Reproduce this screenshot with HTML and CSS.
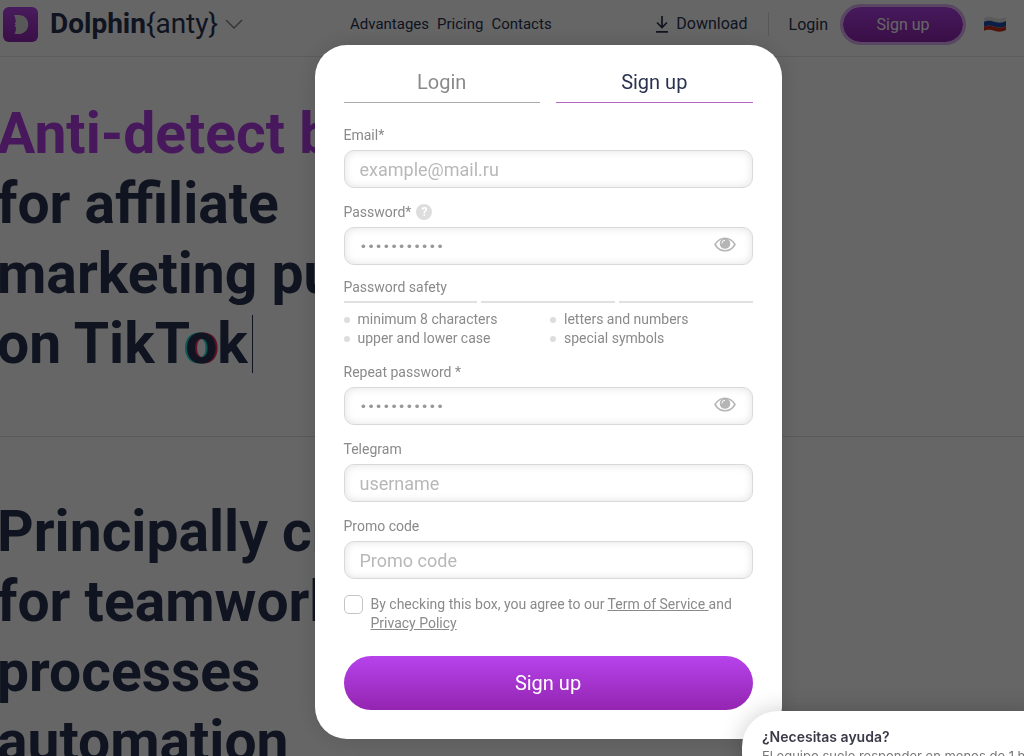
FILE: index.html
```html
<!DOCTYPE html>
<html lang="en">
<head>
<meta charset="utf-8">
<meta name="viewport" content="width=device-width, initial-scale=1">
<title>Dolphin{anty}</title>
<link rel="stylesheet" href="styles.css">
</head>
<body>
<div class="page">
  <header class="header">
    <a class="brand" href="#">
      <svg class="brand-logo" viewBox="0 0 35 35" aria-hidden="true">
        <defs><linearGradient id="logo-fill" x1="0" y1="0" x2="0" y2="1"><stop offset="0" stop-color="#b445ea"/><stop offset="1" stop-color="#9326b0"/></linearGradient></defs>
        <rect width="35" height="35" rx="6" fill="url(#logo-fill)"/>
        <path d="M11 8h4.500c6 0 9.700 4 9.700 9.400S21 27 15.500 27H11.500c1.200-2 1.600-4.500 1.400-7l-1.400-1 1.200-1.600-1.200-1.400 1.400-1C12.800 12.500 12 10 11 8z" fill="#ddd"/>
      </svg>
      <span class="brand-name"><strong>Dolphin</strong>{anty}</span>
      <svg class="brand-chevron" viewBox="0 0 18 10" aria-hidden="true"><path d="M1 1l8 8 8-8" fill="none" stroke="#888" stroke-width="1.500"/></svg>
    </a>
    <nav class="nav">
      <a href="#">Advantages</a>
      <a href="#">Pricing</a>
      <a href="#">Contacts</a>
    </nav>
    <div class="actions">
      <a class="download" href="#">
        <svg viewBox="0 0 14 18" aria-hidden="true"><path d="M7 1v11M2 7.500l5 5 5-5M1 16.800h12" fill="none" stroke="currentColor" stroke-width="1.700"/></svg>
        Download
      </a>
      <a class="login" href="#">Login</a>
      <button class="header-signup" type="button">Sign up</button>
      <button class="language" type="button" aria-label="Russian">
        <svg viewBox="0 0 22 16" aria-hidden="true">
          <path d="M0 2c4-2 7-1 11 0s7 1 11-1v5c-4 2-7 2-11 1S4 5 0 7z" fill="#e4e4e4"/>
          <path d="M0 6c4-2 7-1 11 0s7 1 11-1v5c-4 2-7 2-11 1S4 9 0 11z" fill="#1c4fb0"/>
          <path d="M0 11c4-2 7-1 11 0s7 1 11-1v4c-4 2-7 2-11 1S4 13 0 15z" fill="#c8301c"/>
        </svg>
      </button>
    </div>
  </header>
  <main>
    <section class="section">
      <h1 class="headline"><span class="accent">Anti-detect browser</span><br>for affiliate<br>marketing purposes<br><span class="typed">on TikT<span class="glitch">o</span>k</span></h1>
    </section>
    <section class="section">
      <h2 class="headline">Principally created<br>for teamwork<br>processes<br>automation</h2>
    </section>
  </main>
</div>

<div class="overlay">
  <div class="modal" role="dialog" aria-modal="true" aria-label="Sign up">
    <div class="tabs" role="tablist">
      <button class="tab" type="button" role="tab" aria-selected="false">Login</button>
      <button class="tab tab-active" type="button" role="tab" aria-selected="true">Sign up</button>
    </div>
    <form class="form">
      <div class="field">
        <label for="email">Email*</label>
        <input class="input" id="email" type="email" placeholder="example@mail.ru">
      </div>
      <div class="field">
        <div class="label-row">
          <label for="password">Password*</label>
          <button class="help" type="button" aria-label="Password help">?</button>
        </div>
        <div class="secret">
          <input class="input" id="password" type="password" placeholder="•••••••••••">
          <button class="reveal" type="button" aria-label="Show password">
            <svg viewBox="0 0 22 15" aria-hidden="true"><path d="M1 7.500C3.500 3.300 7 1.200 11 1.200s7.500 2.100 10 6.300c-2.500 4.200-6 6.300-10 6.300S3.500 11.700 1 7.500z" fill="#fff" stroke="#b5b5b5" stroke-width="1.500"/><circle cx="11" cy="6.500" r="5.300" fill="#b5b5b5"/><path d="M7.800 6.500A3.200 3.200 0 0 1 11 3.300" fill="none" stroke="#fff" stroke-width="1"/></svg>
          </button>
        </div>
      </div>
      <div class="safety">
        <p class="safety-title">Password safety</p>
        <div class="meter"><span></span><span></span><span></span></div>
        <ul class="rules">
          <li>minimum 8 characters</li>
          <li>letters and numbers</li>
          <li>upper and lower case</li>
          <li>special symbols</li>
        </ul>
      </div>
      <div class="field">
        <label for="repeat">Repeat password *</label>
        <div class="secret">
          <input class="input" id="repeat" type="password" placeholder="•••••••••••">
          <button class="reveal" type="button" aria-label="Show repeated password">
            <svg viewBox="0 0 22 15" aria-hidden="true"><path d="M1 7.500C3.500 3.300 7 1.200 11 1.200s7.500 2.100 10 6.300c-2.500 4.200-6 6.300-10 6.300S3.500 11.700 1 7.500z" fill="#fff" stroke="#b5b5b5" stroke-width="1.500"/><circle cx="11" cy="6.500" r="5.300" fill="#b5b5b5"/><path d="M7.800 6.500A3.200 3.200 0 0 1 11 3.300" fill="none" stroke="#fff" stroke-width="1"/></svg>
          </button>
        </div>
      </div>
      <div class="field">
        <label for="telegram">Telegram</label>
        <input class="input" id="telegram" type="text" placeholder="username">
      </div>
      <div class="field">
        <label for="promo">Promo code</label>
        <input class="input" id="promo" type="text" placeholder="Promo code">
      </div>
      <div class="consent">
        <input class="checkbox" id="agree" type="checkbox">
        <label for="agree">By checking this box, you agree to our <a href="#">Term of Service </a>and <a href="#">Privacy Policy</a></label>
      </div>
      <button class="submit" type="submit">Sign up</button>
    </form>
  </div>
</div>

<aside class="support">
  <strong>¿Necesitas ayuda?</strong>
  <p>El equipo suele responder en menos de 1 hora</p>
</aside>
</body>
</html>
```
FILE: styles.css
```css
*, *::before, *::after { box-sizing: border-box; }

body {
  margin: 0;
  height: 100vh;
  overflow: hidden;
  background: #fff;
  color: #293350;
  font-family: Roboto, "Liberation Sans", sans-serif;
  font-size: 14px;
}

a { color: inherit; text-decoration: none; }

button {
  margin: 0;
  padding: 0;
  border: 0;
  background: none;
  color: inherit;
  font: inherit;
}

.page { height: 100%; overflow: hidden; }

/* Header */
.header {
  display: flex;
  align-items: center;
  height: 57px;
  padding: 0 18px 8px 3px;
  border-bottom: 1px solid #e6e6e6;
  font-size: 16px;
}

.brand { display: flex; align-items: center; }
.brand-logo { width: 35px; height: 35px; margin-right: 12px; }
.brand-name { font-size: 28px; line-height: 36px; }
.brand-chevron { width: 18px; height: 10px; margin-left: 7px; }

.nav { display: flex; gap: 8px; margin-left: 107px; font-size: 15px; }

.actions { display: flex; align-items: center; margin-left: auto; }

.download {
  display: flex;
  align-items: center;
  gap: 7px;
  padding-right: 20px;
  border-right: 1px solid #ddd;
  line-height: 24px;
}
.download svg { width: 14px; height: 18px; }
.login { margin: 0 12px 0 20px; }

.header-signup {
  width: 126px;
  height: 41px;
  border: 3px solid #dfb0f5;
  border-radius: 21px;
  background: linear-gradient(#b141e8, #9124ae) padding-box;
  color: #fff;
}

.language { margin-left: 18px; }
.language svg { display: block; width: 22px; height: 16px; }

/* Landing text */
.section { padding: 42px 0 57px; border-bottom: 1px solid #e0e0e0; }
.section + .section { padding-top: 60px; border-bottom: 0; }

.headline {
  margin: 0 0 0 -3px;
  font-size: 57px;
  font-weight: 700;
  line-height: 70px;
  white-space: nowrap;
}
.accent { color: #b13fe6; }
.typed { display: inline-block; height: 58px; padding-right: 4px; border-right: 1px solid; line-height: 58px; }
.glitch { text-shadow: -2px 0 #25d5cf, 2px 0 #f0295a; }

/* Dialog */
.overlay {
  position: fixed;
  inset: 0;
  display: flex;
  align-items: flex-start;
  justify-content: center;
  padding: 45px 0 0 72px;
  background: rgba(0, 0, 0, 0.6);
}

.modal {
  width: 100%;
  max-width: 467px;
  padding: 21px 29px 29px;
  border-radius: 32px;
  background: #fff;
  box-shadow: 0 0 24px rgba(0, 0, 0, 0.15);
  color: #8a8a8a;
}

.tabs { display: flex; gap: 16px; margin-bottom: 22px; }
.tab {
  flex: 1;
  padding-bottom: 4px;
  border-bottom: 1px solid #aaa;
  font-size: 20px;
  line-height: 32px;
}
.tab-active { border-color: #b468c4; color: #293350; }

.form { display: flex; flex-direction: column; gap: 14px; line-height: 20px; }
.field { display: flex; flex-direction: column; gap: 5px; }
.label-row { display: flex; align-items: center; gap: 5px; }

.help {
  width: 16px;
  height: 16px;
  border-radius: 50%;
  background: #ddd;
  color: #fff;
  font-size: 12px;
  font-weight: 700;
  line-height: 16px;
}

.input {
  display: block;
  width: 100%;
  height: 38px;
  padding: 0 15px;
  border: 1px solid #d9d9d9;
  border-radius: 10px;
  background: #fff;
  box-shadow: inset 0 0 8px rgba(0, 0, 0, 0.12);
  color: #293350;
  font: 18px Roboto, "Liberation Sans", sans-serif;
}
.input::placeholder { color: #b8b8b8; opacity: 1; }
.input[type="password"] { padding-right: 48px; font: 13px "DejaVu Sans", sans-serif; }
.input[type="password"]::placeholder { color: #999; }

.secret { position: relative; }
.reveal { position: absolute; top: 10px; right: 17px; }
.reveal svg { display: block; width: 22px; height: 15px; }

.safety { margin-top: -2px; }
.safety-title { margin: 0 0 4px; }
.meter { display: flex; gap: 4px; margin-bottom: 7px; }
.meter span { flex: 1; height: 2px; background: #e0e0e0; }

.rules {
  display: grid;
  grid-template-columns: 1fr 1fr;
  column-gap: 4px;
  margin: 0;
  padding: 0;
  list-style: none;
  line-height: 19px;
}
.rules li { display: flex; align-items: center; gap: 8px; }
.rules li::before { content: ""; width: 6px; height: 6px; border-radius: 50%; background: #ddd; }

.consent { display: flex; align-items: flex-start; gap: 8px; margin-top: 2px; line-height: 19px; }
.consent a { text-decoration: underline; }
.checkbox {
  flex: none;
  appearance: none;
  width: 19px;
  height: 19px;
  margin: 0;
  border: 1px solid #c4c4c4;
  border-radius: 5px;
  background: #fff;
}

.submit {
  height: 54px;
  margin-top: 9px;
  border-radius: 27px;
  background: linear-gradient(#b643ec, #9424b0);
  color: #fff;
  font-size: 20px;
}

/* Support bubble */
.support {
  position: fixed;
  right: -40px;
  bottom: -34px;
  width: 322px;
  padding: 16px 0 24px 20px;
  border-radius: 36px;
  background: #fff;
  box-shadow: 0 0 24px rgba(0, 0, 0, 0.2);
  color: #777;
  font-family: Inter, Roboto, sans-serif;
  font-size: 13px;
  line-height: 19px;
  white-space: nowrap;
}
.support strong { color: #3b3b48; font-size: 14px; font-weight: 600; }
.support p { margin: 0; }
```
